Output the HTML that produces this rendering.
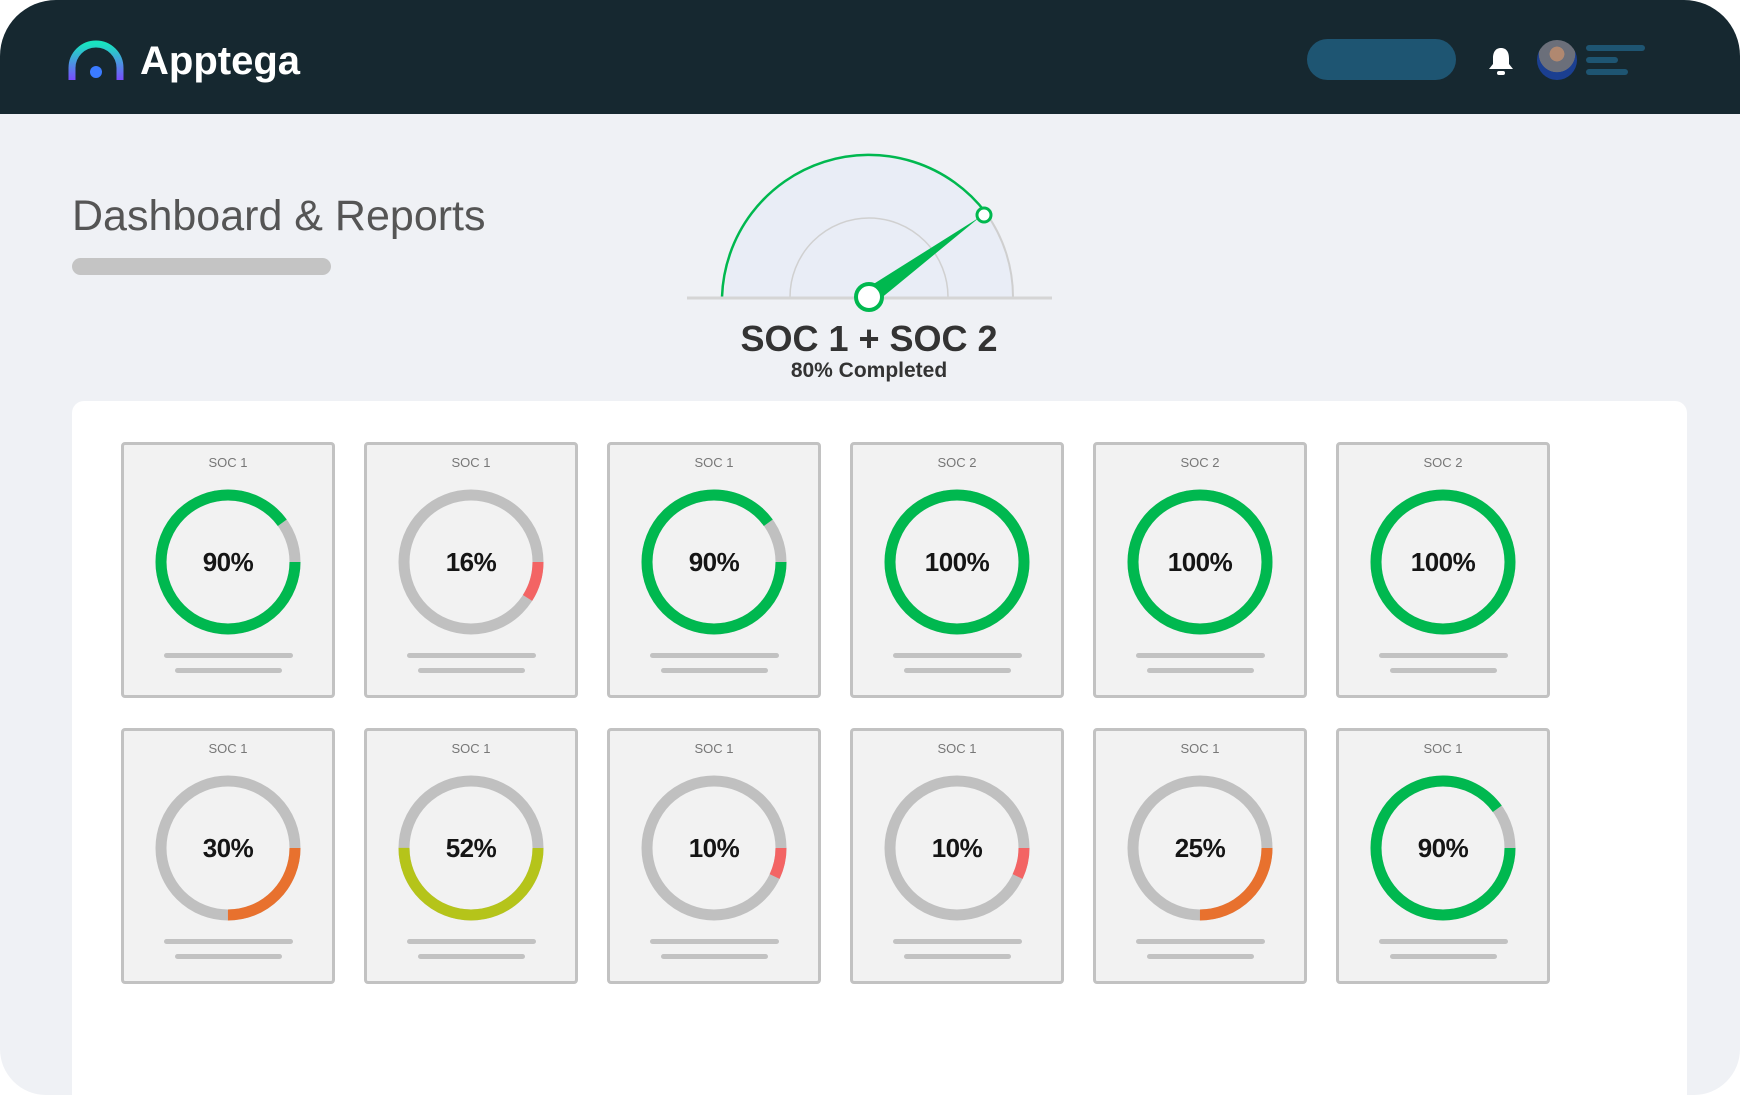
<!DOCTYPE html>
<html><head><meta charset="utf-8"><style>
*{margin:0;padding:0;box-sizing:border-box}
body{width:1740px;height:1095px;background:#fff;overflow:hidden;font-family:"Liberation Sans",sans-serif;position:relative}
#frame{position:absolute;left:0;top:0;width:1740px;height:1095px;background:#eff1f5;border-radius:56px 56px 46px 46px;overflow:hidden}
#hdr{position:absolute;left:0;top:0;width:1740px;height:114px;background:#162830}
.abs{position:absolute}
#panel{position:absolute;left:72px;top:401px;width:1615px;height:720px;background:#fff;border-radius:12px}
.card{position:absolute;width:214px;height:256px;background:#f2f2f2;border:3px solid #c2c2c2;border-radius:4px}
.card .lb{position:absolute;top:10px;left:0;width:100%;text-align:center;font-size:13px;color:#777}
.card svg{position:absolute;left:0;top:0}
.card .pc{position:absolute;left:0;width:100%;top:102px;text-align:center;font-size:26px;font-weight:bold;color:#151515;letter-spacing:-0.5px}
.card .l1{position:absolute;left:40px;width:129px;top:208px;height:5px;border-radius:3px;background:#c2c2c2}
.card .l2{position:absolute;left:51px;width:107px;top:223px;height:5px;border-radius:3px;background:#c2c2c2}
</style></head><body>
<div id="frame">
<div id="hdr">
<svg class="abs" style="left:64px;top:40px" width="64" height="44" viewBox="0 0 64 44">
<defs><linearGradient id="lg" x1="0" y1="0" x2="0" y2="1"><stop offset="0" stop-color="#19e3c0"/><stop offset="1" stop-color="#7a4cff"/></linearGradient></defs>
<path d="M8 40 L8 28 A24 24 0 0 1 56 28 L56 40" fill="none" stroke="url(#lg)" stroke-width="7"/>
<circle cx="32" cy="32" r="6" fill="#3b7bff"/>
</svg>
<div class="abs" style="left:140px;top:39px;font-size:40px;font-weight:bold;color:#fff">Apptega</div>
<div class="abs" style="left:1307px;top:39px;width:149px;height:41px;border-radius:21px;background:#1e5572"></div>
<svg class="abs" style="left:1487px;top:46px" width="28" height="30" viewBox="0 0 28 30"><path d="M14 2 C8 2 6 7 6 12 L6 18 L2 23 L26 23 L22 18 L22 12 C22 7 20 2 14 2Z" fill="#fff"/><rect x="10" y="25" width="8" height="4" rx="2" fill="#fff"/></svg>
<div class="abs" style="left:1537px;top:40px;width:40px;height:40px;border-radius:50%;background:radial-gradient(circle at 50% 35%,#b08870 0 22%,#6b6f7a 23% 55%,#1b3f91 56%)"></div>
<div class="abs" style="left:1586px;top:45px;width:59px;height:6px;border-radius:3px;background:#1e5572"></div>
<div class="abs" style="left:1586px;top:57px;width:32px;height:6px;border-radius:3px;background:#1e5572"></div>
<div class="abs" style="left:1586px;top:69px;width:42px;height:6px;border-radius:3px;background:#1e5572"></div>
</div>
<div class="abs" style="left:72px;top:192px;font-size:43px;color:#555">Dashboard &amp; Reports</div>
<div class="abs" style="left:72px;top:258px;width:259px;height:17px;border-radius:9px;background:#c4c4c4"></div>
<svg class="abs" style="left:0;top:0" width="1740" height="400">
<path d="M725 297 A144 144 0 0 1 1013 297Z" fill="#e9edf6"/>
<path d="M790 297 A79 79 0 0 1 948 297" fill="none" stroke="#d0d0d0" stroke-width="1.5"/>
<path d="M986 213 A144 144 0 0 1 1013 297" fill="none" stroke="#cfcfcf" stroke-width="2"/>
<path d="M722 297 A147 147 0 0 1 986 213" fill="none" stroke="#00b84f" stroke-width="2.5"/>
<line x1="687" y1="298" x2="1052" y2="298" stroke="#d5d5d5" stroke-width="3"/>
<polygon points="874,304 864,290 980,217" fill="#00b84f"/>
<circle cx="984" cy="215" r="7" fill="#fff" stroke="#00b84f" stroke-width="3"/>
<circle cx="869" cy="297" r="13" fill="#fff" stroke="#00b84f" stroke-width="4"/>
</svg>
<div class="abs" style="left:669px;top:318px;width:400px;text-align:center;font-size:36px;font-weight:bold;color:#333">SOC 1 + SOC 2</div>
<div class="abs" style="left:669px;top:359px;width:400px;text-align:center;font-size:21px;font-weight:bold;color:#333">80% Completed</div>
<div id="panel"></div>
<div id="cards"></div>
</div>
<script>
var data=[["SOC 1",90,.9,"#00b84f"],["SOC 1",16,.09,"#f36464"],["SOC 1",90,.9,"#00b84f"],["SOC 2",100,1,"#00b84f"],["SOC 2",100,1,"#00b84f"],["SOC 2",100,1,"#00b84f"],
["SOC 1",30,.25,"#e8712e"],["SOC 1",52,.5,"#b5c41a"],["SOC 1",10,.07,"#f36464"],["SOC 1",10,.07,"#f36464"],["SOC 1",25,.25,"#e8712e"],["SOC 1",90,.9,"#00b84f"]];
var h="",C=2*Math.PI*67;
data.forEach(function(d,i){var x=121+243*(i%6),y=i<6?442:728;var len=d[2]*C;
h+='<div class="card" style="left:'+x+'px;top:'+y+'px"><div class="lb">'+d[0]+'</div><svg width="208" height="250"><circle cx="104" cy="117" r="67" fill="none" stroke="#c0c0c0" stroke-width="11"/><circle cx="104" cy="117" r="67" fill="none" stroke="'+d[3]+'" stroke-width="11" stroke-dasharray="'+len+' '+C+'"/></svg><div class="pc">'+d[1]+'%</div><div class="l1"></div><div class="l2"></div></div>';});
document.getElementById("cards").innerHTML=h;
</script>
</body></html>
